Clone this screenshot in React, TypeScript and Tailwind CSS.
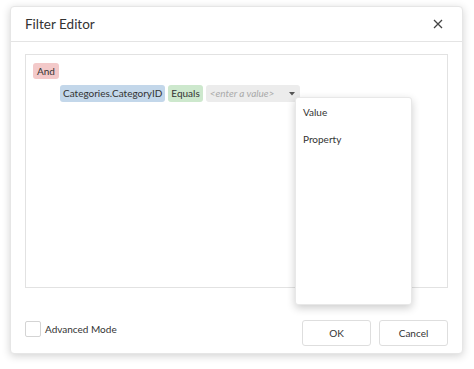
import React from "react";

export default function App() {
  const font = { fontFamily: 'Lato, "Open Sans", sans-serif' };
  return (
    <div className="w-[474px] h-[369px] bg-white relative" style={font}>
      <div className="absolute left-[10px] top-[6px] w-[453px] h-[348px] bg-white rounded-[4px] border border-[#e6e6e6] shadow-[0_2px_8px_rgba(0,0,0,0.18)] flex flex-col">
        <div className="h-[35px] flex items-center justify-between px-[14px] border-b border-[#e4e4e4] shrink-0">
          <span className="text-[13.5px] text-[#333]">Filter Editor</span>
          <svg width="10" height="10" viewBox="0 0 10 10" className="mr-[5px]">
            <path d="M1 1L9 9M9 1L1 9" stroke="#444" strokeWidth="1.3" />
          </svg>
        </div>
        <div className="px-[14px] pt-[12px]">
          <div className="h-[234px] border border-[#e2e2e2] pl-[7px] pt-[8px]">
            <div className="flex">
              <span className="h-[16px] px-[4px] rounded-[3px] bg-[#f3c9c9] text-[#333] text-[10px] leading-[16px]">And</span>
            </div>
            <div className="flex items-center gap-[3px] mt-[6px] ml-[27px]">
              <span className="h-[17px] px-[3px] rounded-[3px] bg-[#c3d7ea] text-[#333] text-[10px] leading-[17px]">Categories.CategoryID</span>
              <span className="h-[17px] px-[3px] rounded-[3px] bg-[#cde8cd] text-[#333] text-[10px] leading-[17px]">Equals</span>
              <span className="h-[17px] w-[94px] pl-[4px] pr-[5px] rounded-[3px] bg-[#ececec] text-[#aaa] text-[10px] leading-[17px] italic flex items-center justify-between">
                <span>&lt;enter a value&gt;</span>
                <svg width="6" height="4" viewBox="0 0 6 4"><path d="M0 0H6L3 3.5Z" fill="#555" /></svg>
              </span>
            </div>
          </div>
        </div>
        <div className="flex-1 flex items-end justify-between px-[14px] pb-[7px]">
          <div className="flex items-center self-start mt-[33px]">
            <span className="w-[16px] h-[16px] border border-[#d4d4d4] rounded-[2px] bg-white" />
            <span className="ml-[4px] text-[10px] text-[#333]">Advanced Mode</span>
          </div>
          <div className="flex gap-[8px]">
            <button className="w-[69px] h-[26px] border border-[#dedede] rounded-[3px] text-[10px] text-[#333] bg-white">OK</button>
            <button className="w-[69px] h-[26px] border border-[#dedede] rounded-[3px] text-[10px] text-[#333] bg-white">Cancel</button>
          </div>
        </div>
      </div>
      <div className="absolute left-[295px] top-[97px] w-[117px] h-[208px] bg-white rounded-[3px] border border-[#e8e8e8] shadow-[0_3px_8px_rgba(0,0,0,0.2)] pt-[6px]">
        <div className="pl-[7px] h-[27px] text-[10px] text-[#333] leading-[16px]">Value</div>
        <div className="pl-[7px] h-[27px] text-[10px] text-[#333] leading-[16px]">Property</div>
      </div>
    </div>
  );
}
